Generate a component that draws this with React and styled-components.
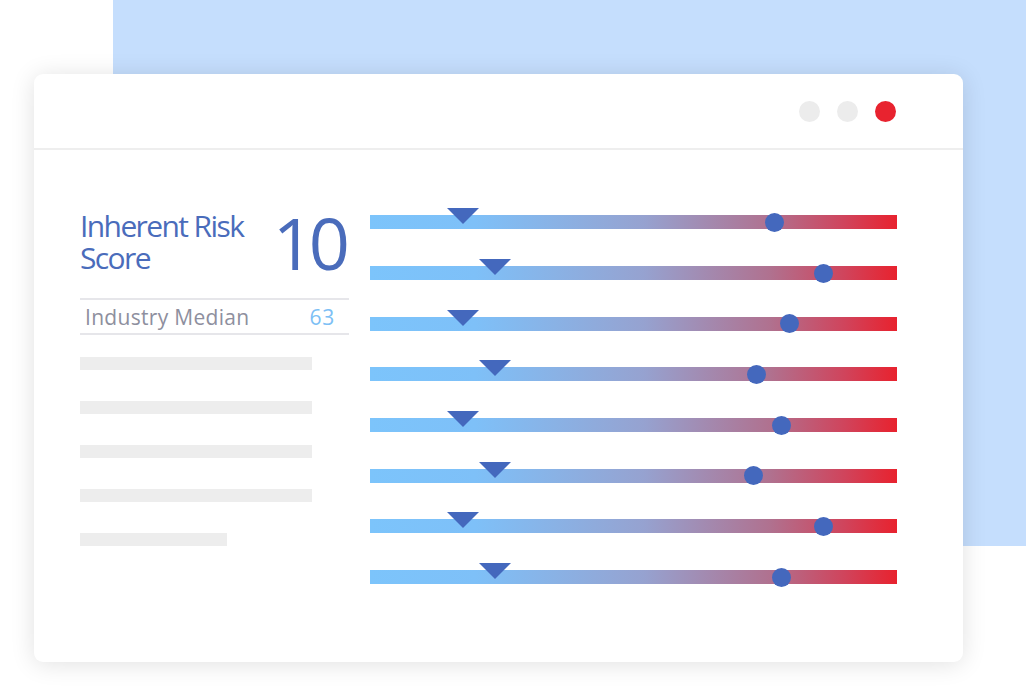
import React from "react";
import styled, { createGlobalStyle } from "styled-components";

const GlobalStyle = createGlobalStyle`
  html, body {
    margin: 0;
    padding: 0;
    background: #fff;
  }
  body {
    font-family: "Open Sans", "Liberation Sans", sans-serif;
  }
`;

const Stage = styled.div`
  position: relative;
  width: 1026px;
  height: 700px;
  overflow: hidden;
  padding: 74px 0 0 34px;
  box-sizing: border-box;
`;

// light blue sheet lying behind the window
const Backdrop = styled.div`
  position: absolute;
  left: 113px;
  top: 0;
  width: 913px;
  height: 546px;
  background: #c5defd;
`;

const Card = styled.div`
  position: relative;
  width: 929px;
  height: 588px;
  background: #fff;
  border-radius: 9px;
  box-shadow: 0 2px 24px rgba(0, 0, 0, 0.12);
  display: flex;
  flex-direction: column;
`;

const TitleBar = styled.div`
  height: 74px;
  border-bottom: 2px solid #eeeeee;
  display: flex;
  align-items: center;
  justify-content: flex-end;
  gap: 17px;
  padding-right: 67px;
`;

const Dot = styled.span`
  width: 21px;
  height: 21px;
  border-radius: 50%;
  background: ${(p) => (p.red ? "#e8232f" : "#ececec")};
`;

const Body = styled.div`
  display: flex;
  gap: 21px;
  padding: 46px 0 0 46px;
`;

const Summary = styled.div`
  width: 269px;
  display: flex;
  flex-direction: column;
  margin-top: 6px;
`;

const ScoreRow = styled.div`
  display: flex;
  justify-content: space-between;
  align-items: flex-start;
  height: 96px;
`;

const ScoreLabel = styled.div`
  color: #4a6cbb;
  font-size: 30px;
  line-height: 32px;
  letter-spacing: -1.6px;
  margin-top: 8px;
`;

const ScoreValue = styled.div`
  color: #4a6cbb;
  font-size: 72px;
  line-height: 72px;
  letter-spacing: -5px;
  margin-right: 4px;
  margin-top: 4px;
`;

const MedianRow = styled.div`
  display: flex;
  justify-content: space-between;
  align-items: center;
  height: 33px;
  border-top: 2px solid #e6e6ea;
  border-bottom: 2px solid #e6e6ea;
  padding: 0 14px 0 5px;
  font-size: 21px;
  letter-spacing: 0.3px;
  color: #8e8f9e;
`;

const MedianValue = styled.span`
  color: #7dbff5;
  letter-spacing: 0.8px;
`;

const Lines = styled.div`
  display: flex;
  flex-direction: column;
  gap: 31px;
  margin-top: 22px;
`;

const Line = styled.div`
  height: 13px;
  width: ${(p) => (p.short ? "147px" : "232px")};
  background: #ededed;
`;

const Sliders = styled.div`
  width: 527px;
  display: flex;
  flex-direction: column;
  margin-top: 1px;
`;

const SliderRow = styled.div`
  position: relative;
  height: 50.7px;
  display: flex;
  align-items: center;
`;

const Track = styled.div`
  width: 100%;
  height: 14px;
  background: linear-gradient(
    90deg,
    #7cc4fb 0%,
    #7ec0f8 20%,
    #96a2d0 52%,
    #b0718f 76%,
    #d0445c 90%,
    #e8222e 100%
  );
`;

const Marker = styled.svg`
  position: absolute;
  top: 50%;
  margin-top: -14px;
  margin-left: -16px;
  width: 32px;
  height: 16px;
`;

const Knob = styled.span`
  position: absolute;
  top: 50%;
  width: 19px;
  height: 19px;
  margin: -9.5px 0 0 -9.5px;
  border-radius: 50%;
  background: #4468bd;
`;

const rows = [
  { median: 93, score: 404 },
  { median: 125, score: 453 },
  { median: 93, score: 419 },
  { median: 125, score: 386 },
  { median: 93, score: 411 },
  { median: 125, score: 383 },
  { median: 93, score: 453 },
  { median: 125, score: 411 },
];

export default function App() {
  return (
    <>
      <GlobalStyle />
      <Stage>
        <Backdrop />
        <Card>
          <TitleBar>
            <Dot />
            <Dot />
            <Dot red />
          </TitleBar>
          <Body>
            <Summary>
              <ScoreRow>
                <ScoreLabel>
                  Inherent Risk
                  <br />
                  Score
                </ScoreLabel>
                <ScoreValue>10</ScoreValue>
              </ScoreRow>
              <MedianRow>
                Industry Median
                <MedianValue>63</MedianValue>
              </MedianRow>
              <Lines>
                <Line />
                <Line />
                <Line />
                <Line />
                <Line short />
              </Lines>
            </Summary>
            <Sliders>
              {rows.map((r, i) => (
                <SliderRow key={i}>
                  <Track />
                  <Marker viewBox="0 0 32 16" style={{ left: r.median }}>
                    <polygon points="0,0 32,0 16,16" fill="#4468bd" />
                  </Marker>
                  <Knob style={{ left: r.score }} />
                </SliderRow>
              ))}
            </Sliders>
          </Body>
        </Card>
      </Stage>
    </>
  );
}
